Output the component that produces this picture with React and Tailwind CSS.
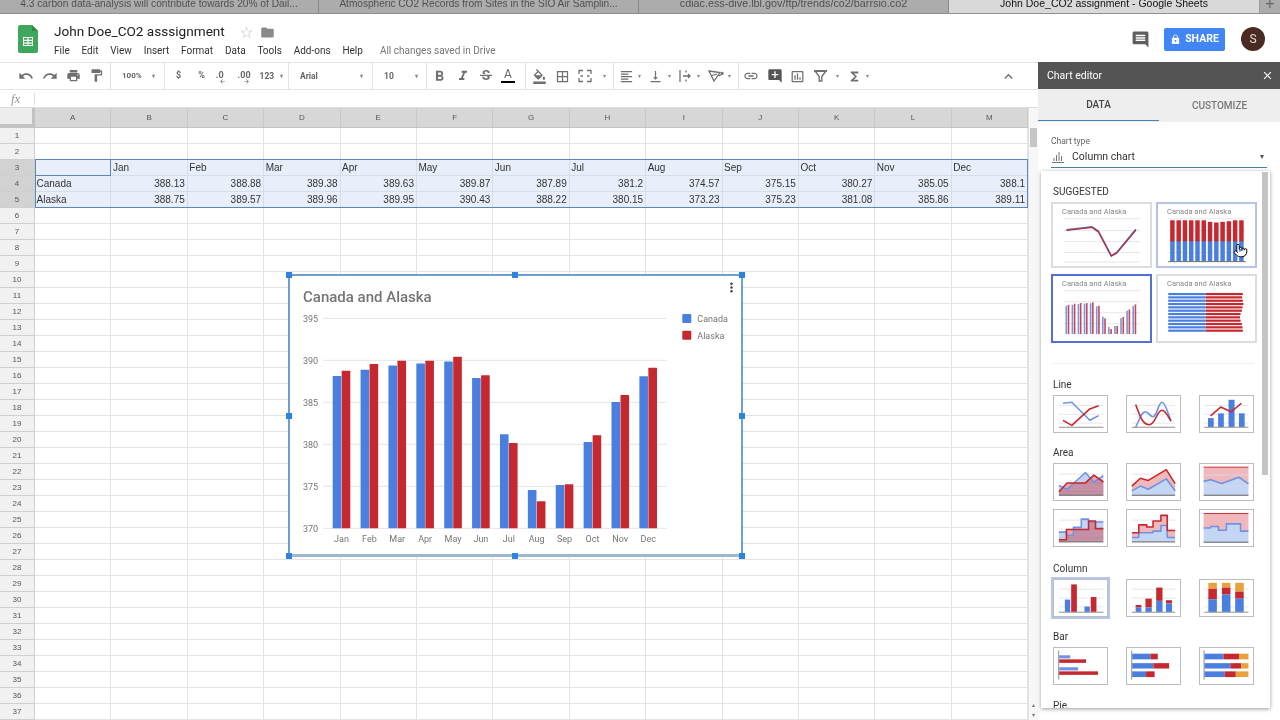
import React from "react";
import {
  MdUndo, MdRedo, MdPrint, MdFormatPaint, MdFormatBold, MdFormatItalic, MdStrikethroughS,
  MdFormatColorFill, MdBorderAll, MdFormatAlignLeft, MdVerticalAlignBottom, MdLink,
  MdAddComment, MdInsertChartOutlined, MdFunctions, MdExpandLess, MdMoreVert, MdLock,
  MdStarBorder, MdFolder, MdClose, MdComment, MdArrowBack, MdArrowForward,
} from "react-icons/md";
import { Pointer } from "lucide-react";

const COLS = ["A", "B", "C", "D", "E", "F", "G", "H", "I", "J", "K", "L", "M"];
const MONTHS = ["Jan", "Feb", "Mar", "Apr", "May", "Jun", "Jul", "Aug", "Sep", "Oct", "Nov", "Dec"];
const CANADA = [388.13, 388.88, 389.38, 389.63, 389.87, 387.89, 381.2, 374.57, 375.15, 380.27, 385.05, 388.1];
const ALASKA = [388.75, 389.57, 389.96, 389.95, 390.43, 388.22, 380.15, 373.23, 375.23, 381.08, 385.86, 389.11];
const MENUS = ["File", "Edit", "View", "Insert", "Format", "Data", "Tools", "Add-ons", "Help"];
const BLUE = "#4a7fe0";
const RED = "#c5282f";
const ORANGE = "#e8a23c";
const GRID = "#e4e4e4";

const Caret = ({ className = "" }) => <span className={`inline-block w-[6px] text-center text-[6px] leading-none text-[#888] ${className}`}>▾</span>;

const Sep = () => <div className="h-full w-px shrink-0 bg-[#e2e2e2]" />;

function Tabs() {
  const tabs = [
    ["w-[319px] text-[10.2px]", "4.3 carbon data-analysis will contribute towards 20% of Dail..."],
    ["w-[320px] text-[10.1px]", "Atmospheric CO2 Records from Sites in the SIO Air Samplin..."],
    ["w-[310px] text-[10.8px]", "cdiac.ess-dive.lbl.gov/ftp/trends/co2/barrsio.co2"],
  ];
  return (
    <div className="flex h-[14px] overflow-hidden border-b border-[#8f8f8f] bg-[#acacac] font-['Liberation_Sans',sans-serif] leading-[7px] text-[#505050]">
      {tabs.map(([w, label]) => (
        <div key={label} className={`${w} truncate border-r border-[#8a8a8a] text-center`}>{label}</div>
      ))}
      <div className="w-[311px] border-r border-[#9a9a9a] bg-[#d9d9d9] text-center text-[10.5px] text-[#111]">John Doe_CO2 assignment - Google Sheets</div>
      <div className="flex-1 text-center text-[16px] text-[#666]">+</div>
    </div>
  );
}

function SheetsLogo() {
  return (
    <svg width="20" height="28" viewBox="0 0 20 28" className="shrink-0">
      <path d="M2 0h12l6 6v20a2 2 0 0 1-2 2H2a2 2 0 0 1-2-2V2a2 2 0 0 1 2-2z" fill="#3fa75b" />
      <path d="M14 0l6 6h-6z" fill="#2a8e47" />
      <path d="M5 12h10v9H5z" fill="#fff" />
      <path d="M6 13h3.4v1.8H6zM10.6 13H14v1.8h-3.4zM6 16h3.4v1.6H6zM10.6 16H14v1.6h-3.4zM6 18.8h3.4V20H6zM10.6 18.8H14V20h-3.4z" fill="#3fa75b" />
    </svg>
  );
}

function Header() {
  return (
    <div className="flex h-[48px] items-start bg-white pl-[18px]">
      <div className="mt-[11px]"><SheetsLogo /></div>
      <div className="ml-[16px] mt-[10px]">
        <div className="flex h-[16px] items-center">
          <span className="text-[13.6px] leading-none text-[#222]">John Doe_CO2 asssignment</span>
          <MdStarBorder className="ml-[14px] text-[#dcdcdc]" size={15} />
          <MdFolder className="ml-[6px] text-[#8a8a8a]" size={15} />
        </div>
        <div className="mt-[4px] flex items-center text-[10px] leading-[14px] text-[#333]">
          <div className="flex gap-[11.8px]">
            {MENUS.map((m) => <span key={m}>{m}</span>)}
          </div>
          <span className="ml-[17px] text-[10px] text-[#777]">All changes saved in Drive</span>
        </div>
      </div>
      <div className="ml-auto mt-[13px] flex items-center pr-[15px]">
        <MdComment className="text-[#5f5f5f]" size={19} />
        <div className="ml-[14px] flex h-[23px] w-[61px] items-center justify-center gap-[4px] rounded-[2px] bg-[#4285f4] text-[10.5px] font-bold text-white">
          <MdLock size={11} />
          <span>SHARE</span>
        </div>
        <div className="ml-[16px] flex h-[24px] w-[24px] items-center justify-center rounded-full bg-[#4a2a22] text-[12px] text-[#e8dcd8]">S</div>
      </div>
    </div>
  );
}

function MergeIcon() {
  return (
    <svg width="14" height="14" viewBox="0 0 14 14" fill="none" stroke="#707070" strokeWidth="1.3">
      <path d="M1 5V1.5h4M9 1.5h4V5M1 9v3.5h4M9 12.5h4V9M2.5 7H5M9 7h2.5" />
    </svg>
  );
}

function WrapIcon() {
  return (
    <svg width="14" height="14" viewBox="0 0 14 14" fill="none" stroke="#707070" strokeWidth="1.3">
      <path d="M2 1v12M5 7h7M10 5l2 2-2 2M8 1.5v2M8 10.5v2" />
    </svg>
  );
}

function RotateIcon() {
  return (
    <svg width="16" height="14" viewBox="0 0 16 14" fill="none" stroke="#707070" strokeWidth="1.3">
      <path d="M1 2l11 1.5L6 12zM4 6.5L9 5M11 7l4-3M13 3.5l2 .5-.5 2" />
    </svg>
  );
}

function FunnelIcon() {
  return (
    <svg width="13" height="12" viewBox="0 0 13 12" fill="none" stroke="#707070">
      <path d="M0 1h13" strokeWidth="2" />
      <path d="M1.5 1.5L5.2 6.5V11h2.6V6.5L11.5 1.5" strokeWidth="1.4" />
    </svg>
  );
}

function Toolbar() {
  return (
    <div className="flex h-[28px] items-center border-y border-[#e2e2e2] text-[#707070]">
      <div className="flex h-full w-[110px] items-center pl-[18px]">
        <div className="flex gap-[8px]">
          <MdUndo size={16} />
          <MdRedo size={16} />
          <MdPrint size={15} />
          <MdFormatPaint size={15} />
        </div>
      </div>
      <Sep />
      <div className="flex h-full w-[53px] items-center pl-[11px] text-[8px] font-bold text-[#666]">
        100%<Caret className="ml-[9px]" />
      </div>
      <Sep />
      <div className="flex h-full w-[123px] items-center pl-[11px] text-[9px] font-bold text-[#666]">
        <span>$</span>
        <span className="ml-[17px]">%</span>
        <span className="relative ml-[11px]">.0<MdArrowBack size={7} className="absolute left-[3px] top-[9px]" /></span>
        <span className="relative ml-[14px]">.00<MdArrowForward size={7} className="absolute left-[5px] top-[9px]" /></span>
        <span className="ml-[9px] text-[8.5px]">123</span>
        <Caret className="ml-[4px]" />
      </div>
      <Sep />
      <div className="flex h-full w-[83px] items-center justify-between pl-[11px] pr-[8px] text-[8.5px] font-bold text-[#666]">
        Arial<Caret />
      </div>
      <Sep />
      <div className="flex h-full w-[53px] items-center justify-between pl-[11px] pr-[7px] text-[8.5px] font-bold text-[#666]">
        10<Caret />
      </div>
      <Sep />
      <div className="flex h-full w-[98px] items-center gap-[7px] pl-[4px]">
        <MdFormatBold size={17} />
        <MdFormatItalic size={16} />
        <MdStrikethroughS size={16} />
        <div className="flex w-[14px] flex-col items-center text-[12px] leading-[11px] text-[#666]">
          A
          <div className="mt-[1px] h-[2px] w-[14px] bg-black" />
        </div>
      </div>
      <Sep />
      <div className="flex h-full w-[87px] items-center gap-[8px] pl-[6px]">
        <MdFormatColorFill size={15} />
        <MdBorderAll size={15} />
        <MergeIcon />
        <Caret className="ml-[1px]" />
      </div>
      <Sep />
      <div className="flex h-full w-[124px] items-center pl-[4.5px]">
        <MdFormatAlignLeft size={15} />
        <Caret className="ml-[2.5px]" />
        <MdVerticalAlignBottom size={15} className="ml-[5.5px]" />
        <Caret className="ml-[3.5px]" />
        <span className="ml-[6px]"><WrapIcon /></span>
        <Caret className="ml-[3px]" />
        <span className="ml-[7px]"><RotateIcon /></span>
        <Caret className="ml-[2px]" />
      </div>
      <Sep />
      <div className="flex h-full flex-1 items-center pl-[4px] pr-[21px]">
        <MdLink size={16} />
        <MdAddComment size={16} className="ml-[8px] text-[#555]" />
        <MdInsertChartOutlined size={15} className="ml-[6.5px]" />
        <span className="ml-[9px]"><FunnelIcon /></span>
        <Caret className="ml-[7.5px]" />
        <MdFunctions size={15} className="ml-[6.5px]" />
        <Caret className="ml-[2.5px]" />
        <MdExpandLess size={17} className="ml-auto" />
      </div>
    </div>
  );
}

function FormulaBar() {
  return (
    <div className="flex h-[18px] items-center border-b border-[#dcdcdc] bg-white">
      <span className="w-[34px] pl-[11px] font-['Liberation_Serif',serif] text-[13px] italic leading-none text-[#999]">fx</span>
      <div className="h-[12px] w-px bg-[#ddd]" />
    </div>
  );
}

const gridRow = "grid grid-cols-[35px_repeat(13,76.4px)]";

function SheetRow({ n }) {
  const selected = n >= 3 && n <= 5;
  const values = n === 3 ? MONTHS : n === 4 ? CANADA : n === 5 ? ALASKA : null;
  const label = n === 4 ? "Canada" : n === 5 ? "Alaska" : "";
  return (
    <div className={`${gridRow} h-[16px]`}>
      <div className={`flex items-center justify-center border-b border-r border-[#cfcfcf] text-[8px] text-[#555] ${selected ? "bg-[#d2d2d2]" : "bg-[#f1f1f1]"}`}>{n}</div>
      {COLS.map((c, i) => {
        const bg = selected ? "bg-[#e8eefa]" : "bg-white";
        const edge = selected ? "border-[#d6dded]" : "border-[#e3e3e3]";
        const value = i === 0 ? label : values ? values[i - 1] : "";
        const align = n === 3 || i === 0 ? "pl-[1.5px] text-left" : "pr-[2px] text-right";
        return (
          <div key={c} className={`overflow-hidden whitespace-nowrap border-b border-r text-[10px] leading-[16px] text-[#333] ${bg} ${edge} ${align}`}>{value}</div>
        );
      })}
    </div>
  );
}

const HANDLES = [
  "left-[-4px] top-[-4px]",
  "left-[222px] top-[-4px]",
  "right-[-4px] top-[-4px]",
  "left-[-4px] top-[137px]",
  "right-[-4px] top-[137px]",
  "left-[-4px] bottom-[-5px]",
  "left-[222px] bottom-[-5px]",
  "right-[-4px] bottom-[-5px]",
];

function EmbeddedChart() {
  const y = (v) => 252.3 - (v - 370) * 8.4;
  const fam = "font-['Roboto',sans-serif]";
  return (
    <div className="absolute left-[288px] top-[166px] h-[283px] w-[455px] border-2 border-b-[3px] border-[#6f9fd0] border-b-[#9db8cf] bg-white">
      <svg width="451" height="278" className={`absolute left-0 top-0 ${fam}`}>
        <text x="13" y="26.3" fontSize="15" fontWeight="500" fill="#757575">Canada and Alaska</text>
        {[395, 390, 385, 380, 375, 370].map((v) => (
          <g key={v}>
            <line x1="33" x2="376.7" y1={y(v)} y2={y(v)} stroke={GRID} strokeWidth="1" />
            <text x="13" y={y(v) + 3.5} fontSize="9" fill="#757575">{v}</text>
          </g>
        ))}
        {MONTHS.map((m, i) => {
          const x = 42.7 + i * 27.88;
          return (
            <g key={m}>
              <rect x={x} y={y(CANADA[i])} width="8.6" height={y(370) - y(CANADA[i])} fill={BLUE} rx="0.5" />
              <rect x={x + 9} y={y(ALASKA[i])} width="8.6" height={y(370) - y(ALASKA[i])} fill={RED} rx="0.5" />
              <text x={x + 8.8} y="265.5" textAnchor="middle" fontSize="9" fill="#757575">{m}</text>
            </g>
          );
        })}
        <rect x="392.3" y="38" width="9" height="9" rx="1" fill={BLUE} />
        <text x="407.3" y="45.7" fontSize="9" fill="#757575">Canada</text>
        <rect x="392.3" y="54.7" width="9" height="9" rx="1" fill={RED} />
        <text x="407.3" y="62.7" fontSize="9" fill="#757575">Alaska</text>
      </svg>
      <MdMoreVert size={15} className="absolute right-[2px] top-[4px] text-[#444]" />
      {HANDLES.map((h) => <div key={h} className={`absolute h-[6px] w-[6px] bg-[#2d83de] ${h}`} />)}
    </div>
  );
}

function Sheet() {
  const rows = Array.from({ length: 37 }, (_, i) => i + 1);
  return (
    <div className="relative flex min-h-0 flex-1 overflow-hidden font-['Liberation_Sans',sans-serif]">
      <div className="w-[1028.2px] shrink-0">
        <div className={`${gridRow} h-[20px] border-b border-[#c4c4c4] bg-[#d7d7d7]`}>
          <div className="border-b-[3px] border-r-[3px] border-[#c2c2c2] bg-[#ededed]" />
          {COLS.map((c) => (
            <div key={c} className="flex items-center justify-center border-r border-[#c8c8c8] text-[8px] text-[#555]">{c}</div>
          ))}
        </div>
        {rows.map((n) => <SheetRow key={n} n={n} />)}
      </div>
      <div className="relative flex flex-1 flex-col items-center border-l border-[#e2e2e2] bg-[#f7f7f7]">
        <div className="mt-[20px] h-[19px] w-[7px] bg-[#c6c6c6]" />
        <div className="mt-auto flex h-[10px] items-center text-[6px] leading-none text-[#777]">▴</div>
        <div className="flex h-[10px] items-center text-[6px] leading-none text-[#777]">▾</div>
      </div>
      <div className="absolute left-[35px] top-[51px] h-[49px] w-[993px] border border-[#5b86bb]" />
      <div className="absolute left-[35px] top-[51px] h-[17px] w-[76px] border-b border-r border-[#5b86bb]" />
      <EmbeddedChart />
    </div>
  );
}

function Lines({ x1, x2, ys, color = "#e6e6e6" }) {
  return ys.map((v) => <line key={v} x1={x1} x2={x2} y1={v} y2={v} stroke={color} strokeWidth="3" />);
}

function Box({ x1, y1, x2, y2, fill }) {
  return <rect x={x1} y={y1} width={x2 - x1} height={y2 - y1} fill={fill} />;
}

function Poly({ d, stroke, width = 5 }) {
  return <path d={d} fill="none" stroke={stroke} strokeWidth={width} strokeLinejoin="round" />;
}

// Suggested tiles, drawn in 3x reference coordinates
function BigTile({ view, className, children }) {
  return (
    <div className={`relative overflow-hidden bg-white ${className}`}>
      <span className="absolute left-[9px] top-[3px] whitespace-nowrap text-[7.5px] leading-[10px] text-[#888]">Canada and Alaska</span>
      <svg viewBox={view} className="absolute inset-0 h-full w-full" preserveAspectRatio="none">{children}</svg>
    </div>
  );
}

function TileLine() {
  return (
    <BigTile view="63 605 303 198" className="h-[66px] border-2 border-[#dcdcdc]">
      <Lines x1={95} x2={335} ys={[652, 690, 725, 760, 790]} />
      <Poly d="M105 687L185 678L205 692L245 770L262 760L322 686" stroke="#5b6fd0" width={5} />
      <Poly d="M105 689L185 680L205 694L245 772L262 762L322 688" stroke="#b2303c" width={4} />
    </BigTile>
  );
}

function TileStack() {
  const tops = [657, 657, 657, 657, 657, 657, 662, 664, 662, 660, 657, 657];
  return (
    <BigTile view="378 605 303 198" className="h-[66px] border-2 border-[#b6c2e8]">
      <Lines x1={410} x2={652} ys={[652, 690, 760]} />
      {tops.map((t, i) => (
        <g key={i}>
          <Box x1={416 + i * 19.6} x2={430 + i * 19.6} y1={722} y2={788} fill={BLUE} />
          <Box x1={416 + i * 19.6} x2={430 + i * 19.6} y1={t} y2={724} fill={RED} />
        </g>
      ))}
      <line x1="410" x2="652" y1="789" y2="789" stroke="#666" strokeWidth="3" />
    </BigTile>
  );
}

function TileCluster() {
  const y = (v) => 1008 - (v - 370) * 4.95;
  return (
    <BigTile view="63 823 303 207" className="h-[69px] border-2 border-[#5470d4]">
      <Lines x1={95} x2={335} ys={[870, 905, 940, 975]} />
      {MONTHS.map((m, i) => (
        <g key={m}>
          <Box x1={102 + i * 19} x2={107 + i * 19} y1={y(CANADA[i])} y2={1008} fill="#7f93d8" />
          <Box x1={109 + i * 19} x2={114 + i * 19} y1={y(ALASKA[i])} y2={1008} fill="#c04a5c" />
        </g>
      ))}
    </BigTile>
  );
}

function TileBars() {
  const ends = [643, 641, 643, 645, 642, 640, 636, 634, 636, 640, 642, 643];
  return (
    <BigTile view="378 823 303 207" className="h-[69px] border-2 border-[#dcdcdc]">
      {ends.map((e, i) => (
        <g key={i}>
          <Box x1={410} x2={527} y1={877 + i * 10.6} y2={884 + i * 10.6} fill={BLUE} />
          <Box x1={527} x2={e} y1={877 + i * 10.6} y2={884 + i * 10.6} fill={RED} />
        </g>
      ))}
    </BigTile>
  );
}

// Small chart type tiles, same 3x coordinates
function Mini({ x, y, active, children }) {
  return (
    <div className={`relative h-[38px] w-[55px] border border-[#bdbdbd] bg-white ${active ? "outline-2 outline-offset-0 outline-[#b8c6ea]" : ""}`}>
      <svg viewBox={`${x} ${y} 165 114`} className="absolute inset-0 h-full w-full">{children}</svg>
    </div>
  );
}

const gl = (y, step = 28) => [0, 1, 2].map((i) => y + i * step);

const LIGHT_BLUE = "#c5d6f5";
const PINK = "#f0b8bb";
const LINE_BLUE = "#6f93e4";

function Minis() {
  return {
    line: [
      <Mini key="l1" x={70} y={135}>
        <Lines x1={84} x2={225} ys={gl(165)} />
        <Poly d="M97 158L125 155L182 212L210 197" stroke={LINE_BLUE} />
        <Poly d="M97 212L125 228L182 176L210 166" stroke={RED} />
        <Lines x1={84} x2={225} ys={[234]} color="#888" />
      </Mini>,
      <Mini key="l2" x={289} y={135}>
        <Lines x1={303} x2={440} ys={gl(165)} />
        <Poly d="M315 235C328 205 335 185 345 185C358 185 362 205 372 200C385 190 388 155 398 155C410 155 418 195 427 213" stroke={LINE_BLUE} />
        <Poly d="M315 162C328 195 335 225 358 226C378 226 382 180 398 180C410 180 418 200 427 215" stroke={RED} />
        <Lines x1={303} x2={440} ys={[234]} color="#888" />
      </Mini>,
      <Mini key="l3" x={508} y={135}>
        <Lines x1={520} x2={660} ys={gl(165)} />
        <Box x1={532} x2={550} y1={205} y2={233} fill={BLUE} />
        <Box x1={564} x2={582} y1={190} y2={233} fill={BLUE} />
        <Box x1={597} x2={616} y1={147} y2={233} fill={BLUE} />
        <Box x1={630} x2={648} y1={190} y2={233} fill={BLUE} />
        <Poly d="M540 198L572 170L605 185L638 158" stroke={RED} />
        <Lines x1={520} x2={660} ys={[234]} color="#888" />
      </Mini>,
    ],
    area1: [
      <Mini key="a1" x={70} y={340}>
        <Lines x1={84} x2={225} ys={gl(372)} />
        <path d="M84 408L110 420L168 367L195 397L225 377V438H84z" fill={LINE_BLUE} opacity=".4" />
        <path d="M84 428L110 400L168 400L195 375L225 397V438H84z" fill={RED} opacity=".4" />
        <Poly d="M84 408L110 420L168 367L195 397L225 377" stroke={LINE_BLUE} />
        <Poly d="M84 428L110 400L168 400L195 375L225 397" stroke={RED} />
        <Lines x1={84} x2={225} ys={[439]} color="#555" />
      </Mini>,
      <Mini key="a2" x={289} y={340}>
        <Lines x1={303} x2={440} ys={gl(372)} />
        <path d="M303 410L330 385L355 392L412 358L440 402V425L412 387L355 420L330 410L303 425z" fill={PINK} />
        <path d="M303 425L330 410L355 420L412 387L440 425V438H303z" fill={LIGHT_BLUE} />
        <Poly d="M303 425L330 410L355 420L412 387L440 425" stroke={LINE_BLUE} />
        <Poly d="M303 410L330 385L355 392L412 358L440 402" stroke={RED} />
        <Lines x1={303} x2={440} ys={[439]} color="#555" />
      </Mini>,
      <Mini key="a3" x={508} y={340}>
        <path d="M518 350H660V403L630 382L575 402L540 390L518 395z" fill={PINK} />
        <path d="M518 395L540 390L575 402L630 382L660 403V438H518z" fill={LIGHT_BLUE} />
        <Lines x1={518} x2={660} ys={[375, 410]} color="#d8d8e8" />
        <Poly d="M518 395L540 390L575 402L630 382L660 403" stroke={LINE_BLUE} />
        <Lines x1={518} x2={660} ys={[350]} color={RED} />
        <Lines x1={518} x2={660} ys={[439]} color="#555" />
      </Mini>,
    ],
    area2: [
      <Mini key="a4" x={70} y={478}>
        <Lines x1={84} x2={225} ys={gl(510)} />
        <path d="M84 548H108V558H130V533H155V507H178V516H225V578H84z" fill={LINE_BLUE} opacity=".4" />
        <path d="M84 572H108V540H178V513H200V537H225V578H84z" fill={RED} opacity=".4" />
        <Poly d="M84 548H108V558H130V533H155V507H178V516H225" stroke={LINE_BLUE} />
        <Poly d="M84 572H108V540H178V513H200V537H225" stroke={RED} />
        <Lines x1={84} x2={225} ys={[579]} color="#555" />
      </Mini>,
      <Mini key="a5" x={289} y={478}>
        <Lines x1={303} x2={440} ys={gl(510)} />
        <path d="M303 550H325V525H350V532H370V513H395V495H415V543H440V565H415V527H395V545H370V550H325V565H303z" fill={PINK} />
        <path d="M303 565H325V550H370V545H395V527H415V565H440V578H303z" fill={LIGHT_BLUE} />
        <Poly d="M303 565H325V550H370V545H395V527H415V565H440" stroke={LINE_BLUE} />
        <Poly d="M303 550H325V525H350V532H370V513H395V495H415V543H440" stroke={RED} />
        <Lines x1={303} x2={440} ys={[579]} color="#555" />
      </Mini>,
      <Mini key="a6" x={508} y={478}>
        <path d="M518 489H660V545H635V522H590V542H565V530H540V535H518z" fill={PINK} />
        <path d="M518 535H540V530H565V542H590V522H635V545H660V580H518z" fill={LIGHT_BLUE} />
        <Poly d="M518 535H540V530H565V542H590V522H635V545H660" stroke={LINE_BLUE} />
        <Lines x1={518} x2={660} ys={[489]} color={RED} />
        <Lines x1={518} x2={660} ys={[580]} color="#555" />
      </Mini>,
    ],
    column: [
      <Mini key="c1" x={70} y={686} active>
        <Lines x1={84} x2={225} ys={gl(715)} />
        <Box x1={103} x2={120} y1={748} y2={787} fill={BLUE} />
        <Box x1={123} x2={141} y1={700} y2={787} fill={RED} />
        <Box x1={165} x2={182} y1={770} y2={787} fill={BLUE} />
        <Box x1={185} x2={203} y1={740} y2={787} fill={RED} />
        <Lines x1={84} x2={225} ys={[788]} color="#888" />
      </Mini>,
      <Mini key="c2" x={289} y={686}>
        <Lines x1={303} x2={440} ys={gl(715)} />
        <Box x1={315} x2={333} y1={765} y2={773} fill={RED} />
        <Box x1={315} x2={333} y1={773} y2={787} fill={BLUE} />
        <Box x1={346} x2={366} y1={745} y2={773} fill={RED} />
        <Box x1={346} x2={366} y1={773} y2={787} fill={BLUE} />
        <Box x1={380} x2={400} y1={710} y2={752} fill={RED} />
        <Box x1={380} x2={400} y1={752} y2={787} fill={BLUE} />
        <Box x1={411} x2={430} y1={750} y2={760} fill={RED} />
        <Box x1={411} x2={430} y1={760} y2={787} fill={BLUE} />
        <Lines x1={303} x2={440} ys={[788]} color="#888" />
      </Mini>,
      <Mini key="c3" x={508} y={686}>
        <Lines x1={520} x2={660} ys={gl(715)} />
        <Box x1={533} x2={560} y1={695} y2={714} fill={ORANGE} />
        <Box x1={533} x2={560} y1={714} y2={747} fill={RED} />
        <Box x1={533} x2={560} y1={747} y2={787} fill={BLUE} />
        <Box x1={576} x2={603} y1={695} y2={710} fill={ORANGE} />
        <Box x1={576} x2={603} y1={710} y2={732} fill={RED} />
        <Box x1={576} x2={603} y1={732} y2={787} fill={BLUE} />
        <Box x1={618} x2={645} y1={695} y2={723} fill={ORANGE} />
        <Box x1={618} x2={645} y1={723} y2={745} fill={RED} />
        <Box x1={618} x2={645} y1={745} y2={787} fill={BLUE} />
        <Lines x1={520} x2={660} ys={[788]} color="#888" />
      </Mini>,
    ],
    bar: [
      <Mini key="b1" x={70} y={892}>
        <Box x1={82} x2={85} y1={900} y2={992} fill="#888" />
        <Box x1={85} x2={120} y1={915} y2={925} fill={LINE_BLUE} />
        <Box x1={85} x2={170} y1={928} y2={939} fill={RED} />
        <Box x1={85} x2={145} y1={953} y2={963} fill={LINE_BLUE} />
        <Box x1={85} x2={208} y1={966} y2={977} fill={RED} />
      </Mini>,
      <Mini key="b2" x={289} y={892}>
        <Box x1={301} x2={304} y1={900} y2={992} fill="#888" />
        <Box x1={304} x2={362} y1={910} y2={928} fill={BLUE} />
        <Box x1={362} x2={385} y1={910} y2={928} fill={RED} />
        <Box x1={304} x2={371} y1={940} y2={957} fill={BLUE} />
        <Box x1={371} x2={421} y1={940} y2={957} fill={RED} />
        <Box x1={304} x2={348} y1={966} y2={984} fill={BLUE} />
        <Box x1={348} x2={375} y1={966} y2={984} fill={RED} />
      </Mini>,
      <Mini key="b3" x={508} y={892}>
        <Box x1={518} x2={521} y1={900} y2={992} fill="#888" />
        <Box x1={521} x2={581} y1={910} y2={928} fill={BLUE} />
        <Box x1={581} x2={630} y1={910} y2={928} fill={RED} />
        <Box x1={630} x2={660} y1={910} y2={928} fill={ORANGE} />
        <Box x1={521} x2={603} y1={940} y2={957} fill={BLUE} />
        <Box x1={603} x2={637} y1={940} y2={957} fill={RED} />
        <Box x1={637} x2={660} y1={940} y2={957} fill={ORANGE} />
        <Box x1={521} x2={585} y1={966} y2={984} fill={BLUE} />
        <Box x1={585} x2={620} y1={966} y2={984} fill={RED} />
        <Box x1={620} x2={660} y1={966} y2={984} fill={ORANGE} />
      </Mini>,
    ],
  };
}

const MiniRow = ({ items, className = "mt-[5px]" }) => (
  <div className={`${className} ml-[12px] grid w-[201px] grid-cols-[55px_55px_55px] gap-x-[18px]`}>{items}</div>
);

const Label = ({ children, className }) => (
  <div className={`ml-[12px] h-[12px] text-[10px] leading-[14px] text-[#333] ${className}`}>{children}</div>
);

function ChartMenu() {
  const m = Minis();
  return (
    <div className="absolute left-[3px] top-[109px] h-[537px] w-[229px] overflow-hidden bg-white shadow-[0_1px_4px_rgba(0,0,0,0.4)]">
      <div className="ml-[12px] mt-[15px] h-[12px] text-[10px] leading-[12px] text-[#333]">SUGGESTED</div>
      <div className="ml-[10px] mt-[4px] grid w-[206px] grid-cols-[101px_101px] gap-x-[4px] gap-y-[6px]">
        <TileLine />
        <TileStack />
        <TileCluster />
        <TileBars />
      </div>
      <div className="ml-[12px] mt-[20px] h-px w-[201px] bg-[#eeeeee]" />
      <Label className="mt-[14px]">Line</Label>
      <MiniRow items={m.line} />
      <Label className="mt-[13px]">Area</Label>
      <MiniRow items={m.area1} />
      <MiniRow items={m.area2} className="mt-[8px]" />
      <Label className="mt-[15px]">Column</Label>
      <MiniRow items={m.column} />
      <Label className="mt-[13px]">Bar</Label>
      <MiniRow items={m.bar} />
      <Label className="mt-[14px]">Pie</Label>
      <div className="absolute right-[2px] top-[1px] h-[303px] w-[6px] bg-[#c4c4c4]" />
    </div>
  );
}

function ChartEditor() {
  return (
    <div className="relative flex w-[242px] shrink-0 flex-col bg-white font-['Roboto',sans-serif]">
      <div className="flex h-[27px] items-center justify-between bg-[#545454] pl-[9px] pr-[6px] text-[10.5px] text-white">
        Chart editor
        <MdClose size={13} />
      </div>
      <div className="flex h-[33px] border-b border-[#eee] bg-[#eeeeee] text-[10px] font-medium">
        <div className="flex w-[121px] items-center justify-center border-b border-[#4a7fc0] text-[#444]">DATA</div>
        <div className="flex flex-1 items-center justify-center text-[#777]">CUSTOMIZE</div>
      </div>
      <div className="ml-[13px] mt-[14px] w-[216px]">
        <div className="text-[8.5px] leading-[10px] text-[#666]">Chart type</div>
        <div className="flex h-[22px] items-center border-b border-[#4c7f9e] text-[10.5px] text-[#333]">
          <svg width="12" height="12" viewBox="0 0 12 12" stroke="#777" fill="none" className="ml-[1px]">
            <path d="M0 11.5h12M2 10V7M4.5 10V4M7 10V1M9.5 10V5" />
          </svg>
          <span className="ml-[8px]">Column chart</span>
          <span className="ml-auto mr-[3px] text-[8px] leading-none text-[#555]">▾</span>
        </div>
      </div>
      <ChartMenu />
      <Pointer size={15} fill="#fff" strokeWidth={1.5} className="absolute left-[195px] top-[181px] text-black" />
    </div>
  );
}

export default function App() {
  return (
    <div className="flex h-[720px] w-[1280px] flex-col overflow-hidden bg-white font-['Roboto',sans-serif] blur-[0.4px]">
      <Tabs />
      <Header />
      <div className="flex min-h-0 flex-1">
        <div className="flex w-[1038px] shrink-0 flex-col">
          <Toolbar />
          <FormulaBar />
          <Sheet />
        </div>
        <ChartEditor />
      </div>
    </div>
  );
}
